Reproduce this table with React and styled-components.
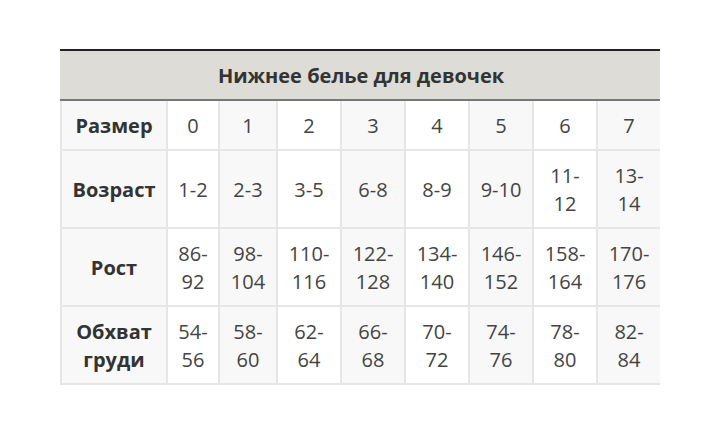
import styled, { createGlobalStyle } from "styled-components";

const GlobalStyle = createGlobalStyle`
  html, body {
    margin: 0;
    padding: 0;
    background: #ffffff;
  }
`;

const rows = [
  { label: "Размер", values: ["0", "1", "2", "3", "4", "5", "6", "7"] },
  { label: "Возраст", values: ["1-2", "2-3", "3-5", "6-8", "8-9", "9-10", "11-12", "13-14"] },
  { label: "Рост", values: ["86-92", "98-104", "110-116", "122-128", "134-140", "146-152", "158-164", "170-176"] },
  { label: "Обхват груди", values: ["54-56", "58-60", "62-64", "66-68", "70-72", "74-76", "78-80", "82-84"] },
];

const widths = [108, 52, 58, 64, 64, 64, 64, 64, 64];

function App() {
  return (
    <Page>
      <GlobalStyle />
      <Scroller>
        <Table>
          <colgroup>
            {widths.map((w, i) => (
              <col key={i} style={{ width: w }} />
            ))}
          </colgroup>
          <thead>
            <tr>
              <Title colSpan={9}>Нижнее белье для девочек</Title>
            </tr>
          </thead>
          <tbody>
            {rows.map((row) => (
              <tr key={row.label}>
                <Label>{row.label}</Label>
                {row.values.map((v, i) => (
                  <Cell key={i} $shaded={i % 2 === 1}>
                    {v}
                  </Cell>
                ))}
              </tr>
            ))}
          </tbody>
        </Table>
      </Scroller>
    </Page>
  );
}

const Page = styled.div`
  padding: 49px 0 0 60px;
  font-family: "Open Sans", "Liberation Sans", sans-serif;
`;

const Scroller = styled.div`
  width: 600px;
  overflow: hidden;
`;

const Table = styled.table`
  width: 602px;
  table-layout: fixed;
  border-collapse: separate;
  border-spacing: 0;
  font-size: 20px;
  line-height: 28px;
`;

const Title = styled.th`
  box-sizing: border-box;
  height: 52px;
  padding: 11px 8px 9px;
  background: #dddcd6;
  border-top: 2px solid #222222;
  border-bottom: 2px solid #777777;
  color: #333333;
  font-weight: 700;
  text-align: center;
`;

const Label = styled.td`
  box-sizing: border-box;
  padding: 11px 8px 9px;
  background: #f8f8f8;
  border-left: 2px solid #e6e6e6;
  border-right: 2px solid #e6e6e6;
  border-bottom: 2px solid #e6e6e6;
  color: #333333;
  font-weight: 700;
  text-align: center;
`;

const Cell = styled.td`
  box-sizing: border-box;
  padding: 11px 8px 9px;
  background: ${(p) => (p.$shaded ? "#f8f8f8" : "#ffffff")};
  border-right: 2px solid #e6e6e6;
  border-bottom: 2px solid #e6e6e6;
  color: #444444;
  font-weight: 400;
  text-align: center;
`;

export default App;
